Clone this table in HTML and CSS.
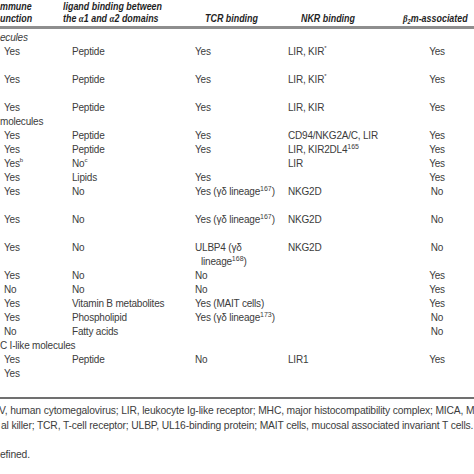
FILE: index.html
```html
<!DOCTYPE html>
<html lang="en">
<head>
<meta charset="utf-8">
<title>MHC class I molecules table</title>
<link rel="stylesheet" href="styles.css">
</head>
<body>
<div class="page">
  <div class="thead">
    <div class="th h1"><span class="hx">mmune<br>unction</span></div>
    <div class="th h2"><span class="hx">ligand binding between<br>the <span class="gr">α</span>1 and <span class="gr">α</span>2 domains</span></div>
    <div class="th h3"><span class="hx">TCR binding</span></div>
    <div class="th h4"><span class="hx">NKR binding</span></div>
    <div class="th h5"><span class="hx"><span class="beta">β</span><sub>2</sub>m-associated</span></div>
  </div>

  <div class="tbody">
    <div class="sec it">ecules</div>
    <div class="row tall"><span class="c1">Yes</span><span>Peptide</span><span class="c3">Yes</span><span>LIR, KIR<sup class="ast">*</sup></span><span class="c5">Yes</span></div>
    <div class="row tall"><span class="c1">Yes</span><span>Peptide</span><span class="c3">Yes</span><span>LIR, KIR<sup class="ast">*</sup></span><span class="c5">Yes</span></div>
    <div class="row"><span class="c1">Yes</span><span>Peptide</span><span class="c3">Yes</span><span>LIR, KIR</span><span class="c5">Yes</span></div>
    <div class="sec">molecules</div>
    <div class="row"><span class="c1">Yes</span><span>Peptide</span><span class="c3">Yes</span><span>CD94/NKG2A/C, LIR</span><span class="c5">Yes</span></div>
    <div class="row"><span class="c1">Yes</span><span>Peptide</span><span class="c3">Yes</span><span>LIR, KIR2DL4<sup>165</sup></span><span class="c5">Yes</span></div>
    <div class="row"><span class="c1">Yes<sup class="ast">b</sup></span><span>No<sup class="ast">c</sup></span><span class="c3"></span><span>LIR</span><span class="c5">Yes</span></div>
    <div class="row"><span class="c1">Yes</span><span>Lipids</span><span class="c3">Yes</span><span></span><span class="c5">Yes</span></div>
    <div class="row tall"><span class="c1">Yes</span><span>No</span><span class="c3">Yes (γδ lineage<sup>167</sup>)</span><span>NKG2D</span><span class="c5">No</span></div>
    <div class="row tall"><span class="c1">Yes</span><span>No</span><span class="c3">Yes (γδ lineage<sup>167</sup>)</span><span>NKG2D</span><span class="c5">No</span></div>
    <div class="row"><span class="c1">Yes</span><span>No</span><span class="c3">ULBP4 (γδ<br>lineage<sup>168</sup>)</span><span>NKG2D</span><span class="c5">No</span></div>
    <div class="row"><span class="c1">Yes</span><span>No</span><span class="c3">No</span><span></span><span class="c5">Yes</span></div>
    <div class="row"><span class="c1">No</span><span>No</span><span class="c3">No</span><span></span><span class="c5">Yes</span></div>
    <div class="row"><span class="c1">Yes</span><span>Vitamin B metabolites</span><span class="c3">Yes (MAIT cells)</span><span></span><span class="c5">Yes</span></div>
    <div class="row"><span class="c1">Yes</span><span>Phospholipid</span><span class="c3">Yes (γδ lineage<sup>173</sup>)</span><span></span><span class="c5">No</span></div>
    <div class="row"><span class="c1">No</span><span>Fatty acids</span><span class="c3"></span><span></span><span class="c5">No</span></div>
    <div class="sec">C I-like molecules</div>
    <div class="row"><span class="c1">Yes</span><span>Peptide</span><span class="c3">No</span><span>LIR1</span><span class="c5">Yes</span></div>
    <div class="row"><span class="c1">Yes</span><span></span><span class="c3"></span><span></span><span class="c5"></span></div>
  </div>

  <div class="tfoot">
    <p class="note n1">V, human cytomegalovirus; LIR, leukocyte Ig-like receptor; MHC, major histocompatibility complex; MICA, MHC class I chain-related A</p>
    <p class="note n2">al killer; TCR, T-cell receptor; ULBP, UL16-binding protein; MAIT cells, mucosal associated invariant T cells.</p>
    <p class="note blank">&nbsp;</p>
    <p class="note n4">efined.</p>
  </div>
</div>
</body>
</html>
```

FILE: styles.css
```css
html, body {
  margin: 0;
  padding: 0;
  background: #ffffff;
}

body {
  width: 474px;
  height: 474px;
  overflow: hidden;
  font-family: "Liberation Sans", Arial, sans-serif;
  font-size: 10px;
  letter-spacing: -0.2px;
  color: #3c3c3c;
}

.page {
  width: 474px;
  height: 474px;
  overflow: hidden;
}

.thead {
  display: grid;
  grid-template-columns: 72px 123px 93px 112px 74px;
  align-items: end;
  padding-bottom: 2px;
  border-bottom: 3px solid #8e8e8e;
  font-family: "Liberation Sans", Arial, sans-serif;
  font-size: 11px;
  line-height: 12px;
  letter-spacing: 0;
  font-weight: bold;
  font-style: italic;
  color: #1f1f1f;
  white-space: nowrap;
  overflow: hidden;
}

.th {
  min-width: 0;
}

.hx {
  display: inline-block;
  transform: scaleX(0.81);
  transform-origin: 0 100%;
}

.h2 { margin-left: -9px; }
.h3 { padding-left: 10px; }
.h4 { padding-left: 13px; }
.h5 { padding-left: 3px; }

.gr {
  font-family: "Liberation Serif", serif;
  font-weight: bold;
}

.beta {
  font-family: "Liberation Serif", serif;
}

.h5 sub {
  font-size: 7px;
  line-height: 0;
  vertical-align: -2px;
}

.tbody {
  padding-top: 2px;
  padding-bottom: 16px;
  line-height: 14px;
  border-bottom: 2px solid #707070;
}

.sec {
  height: 14px;
  white-space: nowrap;
}

.sec.it {
  font-style: italic;
}

.row {
  display: grid;
  grid-template-columns: 72px 123px 93px 112px 74px;
  white-space: nowrap;
}

.row.tall {
  min-height: 28px;
}

.c1 {
  padding-left: 4px;
}

.c3 {
  padding-left: 6px;
  text-indent: -6px;
}

.c5 {
  text-align: center;
}

sup {
  font-size: 7px;
  line-height: 0;
  letter-spacing: 0;
  vertical-align: 4px;
}

sup.ast {
  font-size: 6px;
  vertical-align: 5px;
}

.tfoot {
  padding-top: 5px;
  font-size: 10.3px;
  letter-spacing: -0.15px;
}

.note {
  margin: 0;
  line-height: 14.5px;
  white-space: nowrap;
}

.n1 { margin-left: -1px; }
.n2 { margin-left: 1px; }
```
